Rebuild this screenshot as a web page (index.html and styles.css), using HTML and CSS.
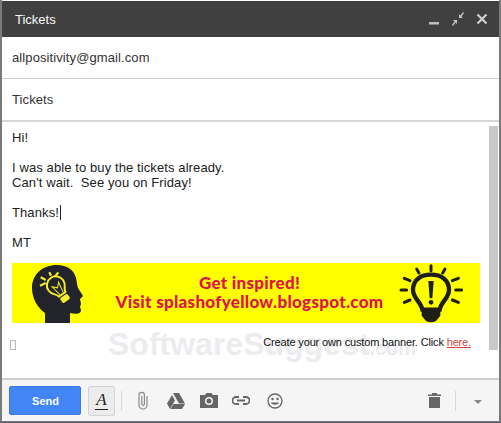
FILE: index.html
```html
<!DOCTYPE html>
<html lang="en">
<head>
<meta charset="utf-8">
<title>Tickets</title>
<link rel="stylesheet" href="styles.css">
</head>
<body>
<div class="window">
  <header class="titlebar">
    <span class="title">Tickets</span>
    <div class="controls">
      <svg class="ctl" width="12" height="12" viewBox="0 0 12 12"><rect x="1" y="9" width="10" height="2.500" fill="#bdbdbd"/></svg>
      <svg class="ctl" width="14" height="16" viewBox="0 0 14 16"><path d="M8 7V3l1.500 1.500L12 1l1 1-2.500 3.500L12 7zM6 9v4l-1.500-1.500L2 15l-1-1 2.500-3.500L2 9z" fill="#c4c4c4"/></svg>
      <svg class="ctl" width="12" height="12" viewBox="0 0 12 12"><path d="M1.500 1.500l9 9M10.500 1.500l-9 9" stroke="#cfcfcf" stroke-width="2.200" fill="none"/></svg>
    </div>
  </header>
  <div class="field">allpositivity@gmail.com</div>
  <div class="field subject">Tickets</div>
  <div class="body">
    <div class="content">
      <p>Hi!</p>
      <p>I was able to buy the tickets already.<br>Can't wait.&nbsp; See you on Friday!</p>
      <p>Thanks!<span class="caret"></span></p>
      <p class="last">MT</p>
      <div class="banner">
        <svg class="head" width="54" height="60" viewBox="0 0 54 60">
          <path d="M13 60V50C6 45 0 36 0 25 0 11 11 2 25 2c10 0 17 5 19 13 1 4 1 7 2 10l5 8-3 3 1 5-1 3 1 3c0 3-3 5-11 3v10z" fill="#23232b"/>
          <g transform="rotate(-35 25 24)">
            <path d="M21 33c0-4-5-5-5-11a9 9 0 0 1 18 0c0 6-5 7-5 11z" fill="none" stroke="#f5ee2a" stroke-width="2"/>
            <path d="M23 32l-2-11 4 4 4-4-2 11" fill="none" stroke="#f5ee2a" stroke-width="1"/>
            <rect x="20.500" y="35" width="9" height="6" rx="1.500" fill="#f5ee2a"/>
          </g>
          <path d="M8.700 14.300l5 2.700M17.300 9.300l1.700 3.400M26.300 9.300L23 13.700M8 22.700l5.700-2.700" stroke="#f5ee2a" stroke-width="2.200" fill="none"/>
        </svg>
        <div class="slogan"><div>Get inspired!</div><div>Visit splashofyellow.blogspot.com</div></div>
        <svg class="bulb" width="75" height="60" viewBox="0 12 225 180">
          <path d="M82 152C78 128 54 118 54 92 54 62 78 47 108 47s54 15 54 45c0 26-24 36-28 60z" fill="#ffff00" stroke="#1f1f1a" stroke-width="13"/>
          <path d="M80 155h56v15l-8 10q-6 10-20 10t-20-10l-8-10z" fill="#1f1f1a"/>
          <path d="M100 66h16l-4 52h-8z" fill="#1f1f1a"/>
          <circle cx="108" cy="130" r="7" fill="#1f1f1a"/>
          <path d="M108 20v15M65 30l7 12M150 30l-7 12M28 58l17 7M190 58l-18 7M18 93h17M182 93h18M28 130l17-7M190 130l-18-7" stroke="#1f1f1a" stroke-width="9" fill="none" stroke-linecap="round"/>
        </svg>
      </div>
      <div class="footer-line">
        <span class="glyph"></span>
        <span class="promo">Create your own custom banner. Click <a href="#">here.</a></span>
      </div>
      <div class="watermark">SoftwareSuggest<span class="dotcom">.com</span></div>
    </div>
    <div class="scrollbar"></div>
  </div>
  <footer class="toolbar">
    <button class="send">Send</button>
    <button class="format"><span>A</span></button>
    <span class="sep"></span>
    <svg class="tool clip" width="12" height="19" viewBox="0 0 12 19"><path d="M10 5v9a4 4 0 0 1-8 0V4a2.700 2.700 0 0 1 5.400 0v9a1.300 1.300 0 0 1-2.600 0V5" fill="none" stroke="#8a8a8a" stroke-width="1.200"/></svg>
    <svg class="tool drive" width="18" height="16" viewBox="0 0 18 16"><path d="M6 0h6l6 10.500h-6zM5 2L0 10.500 3 16l5-8.500zM6.500 11l-3 5H15l3-5z" fill="#666"/></svg>
    <svg class="tool cam" width="18" height="15" viewBox="0 0 18 15"><path fill-rule="evenodd" d="M0 2h5l1.500-2h5L13 2h5v13H0zM9 4a4 4 0 1 0 0 8 4 4 0 0 0 0-8zm0 1.500a2.500 2.500 0 1 1 0 5 2.500 2.500 0 0 1 0-5z" fill="#666"/></svg>
    <svg class="tool link" width="18" height="9" viewBox="0 0 18 9"><path d="M7 1H4a3.300 3.300 0 0 0 0 7h3M11 1h3a3.300 3.300 0 0 1 0 7h-3M5 4.500h8" fill="none" stroke="#666" stroke-width="1.800"/></svg>
    <svg class="tool smile" width="16" height="16" viewBox="0 0 16 16"><circle cx="8" cy="8" r="7" fill="none" stroke="#666" stroke-width="1.300"/><circle cx="5.500" cy="6" r="1.200" fill="#666"/><circle cx="10.500" cy="6" r="1.200" fill="#666"/><path d="M4 9.500c1 3 7 3 8 0z" fill="#666"/></svg>
    <span class="spacer"></span>
    <svg class="tool trash" width="13" height="15" viewBox="0 0 13 15"><path d="M1 4h11v11H1zM0 1.500h4V0h5v1.500h4V3H0z" fill="#666"/></svg>
    <span class="sep sep-right"></span>
    <span class="arrow"></span>
  </footer>
</div>
</body>
</html>
```

FILE: styles.css
```css
* { box-sizing: border-box; }
html, body { margin: 0; height: 100%; }
body { background: #5a5f66; font-family: "Liberation Sans", Arial, sans-serif; overflow: hidden; }
.window { width: 501px; height: 422px; padding-top: 1px; display: flex; flex-direction: column; background: #fff; border-left: 2px solid #7a7a7a; border-right: 2px solid #7a7a7a; border-bottom: 1px solid #777; background-clip: padding-box; }
.titlebar { flex: none; height: 36px; background: #404040; display: flex; align-items: center; justify-content: space-between; padding: 0 11px 0 13px; }
.title { font-size: 13px; color: #f8f8f8; }
.controls { display: flex; align-items: center; gap: 11px; }
.field { flex: none; height: 42px; line-height: 41px; padding-left: 10px; font-size: 13px; color: #333; border-bottom: 1px solid #cfcfcf; letter-spacing: 0.1px; }
.subject { height: 43px; border-bottom: 2px solid #d6d6d6; }
.body { flex: 1; position: relative; display: flex; overflow: hidden; min-height: 0; }
.content { position: relative; flex: 1; padding: 8px 0 0 10px; font-size: 13px; line-height: 15px; color: #222; letter-spacing: 0.1px; min-width: 0; }
.content p { margin: 0 0 15px; }
.content .last { margin-bottom: 13px; }
.caret { display: inline-block; width: 1px; height: 15px; background: #222; vertical-align: -3px; margin-left: 1px; }
.banner { width: 468px; height: 60px; background: #ffff00; display: flex; align-items: flex-end; }
.head { margin-left: 20px; flex: none; }
.slogan { flex: 1; text-align: center; align-self: center; padding: 0 0 3px 18px; color: #e0134f; font-family: "Lato", "Open Sans", sans-serif; font-weight: 900; font-size: 17px; line-height: 19px; letter-spacing: 0.3px; white-space: nowrap; }
.bulb { flex: none; margin-right: 10px; }
.footer-line { display: flex; justify-content: space-between; align-items: flex-end; width: 470px; height: 27px; position: relative; z-index: 1; }
.glyph { width: 6px; height: 10px; border: 1px solid #bbb; margin-left: -2px; }
.promo { font-size: 11px; letter-spacing: -0.15px; color: #111; line-height: 14px; margin: 0 11px 1px 0; }
.promo a { color: #d2453d; text-decoration: underline; }
.watermark { position: absolute; left: 106px; top: 204px; font-size: 32px; line-height: 36px; font-weight: 700; color: #ececef; letter-spacing: 0; white-space: nowrap; }
.dotcom { font-size: 20px; }
.scrollbar { width: 9px; height: 224px; top: 4px; right: 1px; background: #c8c8c8; position: absolute; }
.toolbar { flex: none; height: 43px; background: #f5f5f5; border-top: 2px solid #cfcfcf; display: flex; align-items: center; padding: 0 7px; }
.send { width: 72px; height: 29px; background: #4285f4; border: 1px solid #3b78e7; border-radius: 2px; color: #fff; font: 700 11px "Liberation Sans", Arial, sans-serif; padding: 0 0 0 1px; }
.format { width: 27px; height: 30px; margin-left: 7px; background: #ececec; border: 1px solid #d4d4d4; border-radius: 2px; padding: 0; font: italic 17px/15px "Liberation Serif", serif; color: #222; }
.format span { display: inline-block; border-bottom: 1px solid #222; padding: 0 1px 2px; }
.sep { width: 1px; height: 20px; background: #d8d8d8; margin-left: 6px; }
.tool { flex: none; }
.clip { margin-left: 15px; }
.drive { margin-left: 18px; }
.cam { margin-left: 15px; }
.link { margin-left: 14px; }
.smile { margin-left: 17px; }
.spacer { flex: 1; }
.trash { margin-right: 14px; }
.sep-right { margin: 0; }
.arrow { width: 0; height: 0; margin: 2px 10px 0 18px; border-left: 4px solid transparent; border-right: 4px solid transparent; border-top: 4px solid #888; }
```
